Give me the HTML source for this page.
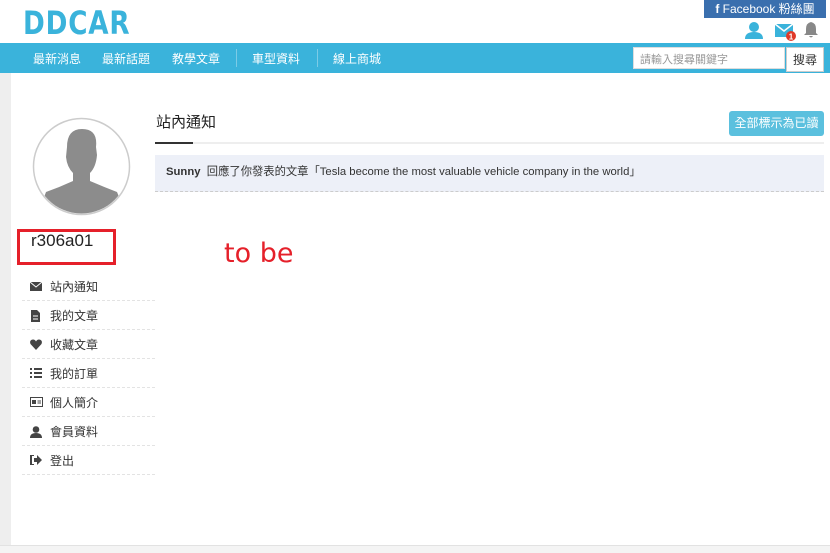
<!DOCTYPE html>
<html><head><meta charset="utf-8"><style>
*{margin:0;padding:0;box-sizing:border-box}
body{width:830px;height:553px;overflow:hidden;background:#fff;font-family:"Liberation Sans","Noto Sans CJK TC",sans-serif;position:relative}
.abs{position:absolute}
.logo{left:23px;top:4px;font-size:32px;font-weight:bold;color:#3ab3db;letter-spacing:1px;font-family:"DejaVu Sans","Liberation Sans",sans-serif;transform:scaleX(0.82);transform-origin:left top}
.fb{left:704px;top:0;width:122px;height:18px;background:#3a6fae;color:#fff;font-size:12px;line-height:18px;text-align:center}
.nav{left:0;top:43px;width:830px;height:30px;background:#3ab3db}
.nav span{position:absolute;top:7px;color:#fff;font-size:12px}
.sep{position:absolute;top:6px;width:1px;height:18px;background:#7ccbe6}
.search{left:633px;top:47px;width:152px;height:22px;background:#fff;border:1px solid #ddd;font-size:11px;color:#999;padding:3px 6px}
.sbtn{left:786px;top:47px;width:38px;height:25px;background:#fff;border:1px solid #ccc;font-size:12px;text-align:center;line-height:24px;color:#333}
.leftbar{left:0;top:73px;width:11px;height:472px;background:#eee}
.bottom{left:0;top:545px;width:830px;height:8px;background:#f4f4f4;border-top:1px solid #e2e2e2}
.menu{left:22px;width:133px;height:29px;border-bottom:1px dashed #e3e3e3;font-size:12px;color:#333}
.menu span{position:absolute;left:28px;top:6px}
.menu svg{position:absolute;left:8px;top:9px}
</style></head><body>
<div class="abs logo">DDCAR</div>
<div class="abs fb"><b>f</b> Facebook 粉絲團</div>
<svg class="abs" style="left:744px;top:21px" width="20" height="18" viewBox="0 0 20 18"><circle cx="10" cy="6" r="5" fill="#3ab3db"/><path d="M1 18 Q1 11 10 11 Q19 11 19 18Z" fill="#3ab3db"/></svg>
<svg class="abs" style="left:775px;top:23px" width="22" height="18" viewBox="0 0 22 18"><rect x="0" y="1" width="18" height="13" fill="#3ab3db"/><path d="M0 1 L9 8 L18 1" stroke="#fff" stroke-width="1.5" fill="none"/><circle cx="16" cy="13" r="5" fill="#e03a2a"/><text x="16" y="16.5" font-size="8" fill="#fff" text-anchor="middle" font-family="Liberation Sans" font-weight="bold">1</text></svg>
<svg class="abs" style="left:803px;top:21px" width="16" height="18" viewBox="0 0 16 18"><path d="M8 1 Q3 2 3 8 L3 12 L1 14 L15 14 L13 12 L13 8 Q13 2 8 1Z M6 15 Q8 18 10 15Z" fill="#888"/></svg>
<div class="abs nav">
<span style="left:33px">最新消息</span><span style="left:102px">最新話題</span><span style="left:172px">教學文章</span>
<div class="sep" style="left:236px"></div><span style="left:252px">車型資料</span>
<div class="sep" style="left:317px"></div><span style="left:333px">線上商城</span>
</div>
<div class="abs search">請輸入搜尋關鍵字</div>
<div class="abs sbtn">搜尋</div>
<div class="abs leftbar"></div>
<div class="abs bottom"></div>
<svg class="abs" style="left:32px;top:117px" width="99" height="99" viewBox="0 0 99 99"><circle cx="49.5" cy="49.5" r="48" fill="#fff" stroke="#ccc" stroke-width="1.5"/><clipPath id="c"><circle cx="49.5" cy="49.5" r="47"/></clipPath><g clip-path="url(#c)" fill="#8c8c8c"><path d="M35 30 Q35 12 50 12 Q66 12 64 30 L65 38 Q64 50 58 56 L58 64 Q72 70 85 75 L95 99 L5 99 L14 75 Q28 70 41 64 L41 56 Q35 50 34 40Z"/></g></svg>
<div class="abs" style="left:17px;top:229px;width:99px;height:36px;border:3px solid #e5202a"></div>
<div class="abs" style="left:31px;top:231px;font-size:17px;color:#222">r306a01</div>
<div class="abs" style="left:224px;top:238px;font-size:27px;color:#e5202a;font-family:'DejaVu Sans',sans-serif">to be</div>
<div class="abs menu" style="top:272px"><svg width="12" height="10"><rect y="1" width="12" height="9" fill="#444"/><path d="M0 1 L6 6 L12 1" stroke="#fff" fill="none"/></svg><span>站內通知</span></div>
<div class="abs menu" style="top:301px"><svg width="12" height="12"><path d="M1 0 H7 L10 3 V12 H1Z" fill="#444"/><path d="M3 6H8M3 9H8" stroke="#fff"/></svg><span>我的文章</span></div>
<div class="abs menu" style="top:330px"><svg width="12" height="11"><path d="M6 11 L0.5 5 Q-1 1 3 0.5 Q5 0.5 6 2.5 Q7 0.5 9 0.5 Q13 1 11.5 5Z" fill="#444"/></svg><span>收藏文章</span></div>
<div class="abs menu" style="top:359px"><svg width="12" height="10"><path d="M0 1H2M4 1H12M0 5H2M4 5H12M0 9H2M4 9H12" stroke="#444" stroke-width="2"/></svg><span>我的訂單</span></div>
<div class="abs menu" style="top:388px"><svg width="13" height="10"><rect x="0.5" y="0.5" width="12" height="9" fill="none" stroke="#444"/><rect x="2" y="3" width="4" height="4" fill="#444"/><path d="M7.5 4H11M7.5 6H11" stroke="#444"/></svg><span>個人簡介</span></div>
<div class="abs menu" style="top:417px"><svg width="12" height="12"><circle cx="6" cy="3.5" r="3.3" fill="#444"/><path d="M0 12 Q0 7 6 7 Q12 7 12 12Z" fill="#444"/></svg><span>會員資料</span></div>
<div class="abs menu" style="top:446px"><svg width="12" height="10"><path d="M4 0H1V10H4" stroke="#444" stroke-width="2" fill="none"/><path d="M4 3H7V0L12 5L7 10V7H4Z" fill="#444"/></svg><span>登出</span></div>
<div class="abs" style="left:156px;top:111px;font-size:15px;color:#222">站內通知</div>
<div class="abs" style="left:155px;top:142px;width:669px;height:2px;background:#eee"></div>
<div class="abs" style="left:155px;top:142px;width:38px;height:2px;background:#333"></div>
<div class="abs" style="left:729px;top:111px;width:95px;height:25px;background:#5bc0de;border-radius:3px;color:#fff;font-size:12px;line-height:25px;text-align:center">全部標示為已讀</div>
<div class="abs" style="left:155px;top:155px;width:669px;height:37px;background:#edf0f8;border-bottom:1px dashed #ccc;font-size:11.3px;color:#333;line-height:34px;padding-left:11px"><b>Sunny</b>&nbsp; 回應了你發表的文章「Tesla become the most valuable vehicle company in the world」</div>
</body></html>
